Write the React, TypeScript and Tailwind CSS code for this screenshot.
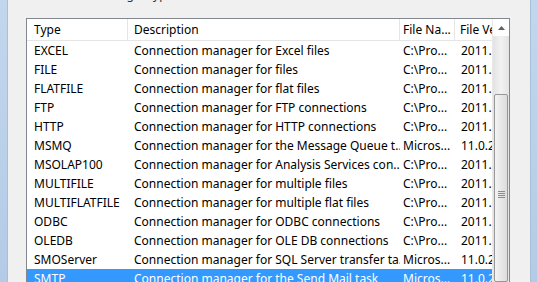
import React from "react";

interface Row {
  type: string;
  description: string;
  fileName: string;
  version: string;
  selected?: boolean;
}

const rows: Row[] = [
  {type: "EXCEL", description: "Connection manager for Excel files", fileName: "C:\\Pro...", version: "2011.0110.2100.060"},
  {type: "FILE", description: "Connection manager for files", fileName: "C:\\Pro...", version: "2011.0110.2100.060"},
  {type: "FLATFILE", description: "Connection manager for flat files", fileName: "C:\\Pro...", version: "2011.0110.2100.060"},
  {type: "FTP", description: "Connection manager for FTP connections", fileName: "C:\\Pro...", version: "2011.0110.2100.060"},
  {type: "HTTP", description: "Connection manager for HTTP connections", fileName: "C:\\Pro...", version: "2011.0110.2100.060"},
  {type: "MSMQ", description: "Connection manager for the Message Queue t...", fileName: "Micros...", version: "11.0.2100.60"},
  {type: "MSOLAP100", description: "Connection manager for Analysis Services con...", fileName: "C:\\Pro...", version: "2011.0110.2100.060"},
  {type: "MULTIFILE", description: "Connection manager for multiple files", fileName: "C:\\Pro...", version: "2011.0110.2100.060"},
  {type: "MULTIFLATFILE", description: "Connection manager for multiple flat files", fileName: "C:\\Pro...", version: "2011.0110.2100.060"},
  {type: "ODBC", description: "Connection manager for ODBC connections", fileName: "C:\\Pro...", version: "2011.0110.2100.060"},
  {type: "OLEDB", description: "Connection manager for OLE DB connections", fileName: "C:\\Pro...", version: "2011.0110.2100.060"},
  {type: "SMOServer", description: "Connection manager for SQL Server transfer ta...", fileName: "Micros...", version: "11.0.2100.60"},
  {type: "SMTP", description: "Connection manager for the Send Mail task", fileName: "Micros...", version: "11.0.2100.60", selected: true},
];

const font = {fontFamily: '"Segoe UI", "Noto Sans", sans-serif'};

export default function App() {
  return (
    <div className="flex w-[537px] h-[282px] overflow-hidden bg-[#f0f0f0] text-[12px] text-black" style={font}>
      {/* window frame, left */}
      <div className="w-[8px] shrink-0 bg-gradient-to-b from-[#c2d7ee] to-[#b3cbe6] border-r border-[#a9bfd6]" />

      <div className="flex-1 min-w-0 flex flex-col pl-[18px] pr-[20px]">
        {/* label, mostly scrolled out of view */}
        <div className="h-[18px] shrink-0 overflow-hidden">
          <div className="-mt-[13px] leading-[16px] pl-[1px] whitespace-nowrap text-[#333]">Connection manager type:</div>
        </div>

        {/* list view */}
        <div className="flex-1 min-h-0 flex border border-b-0 border-[#828790] bg-white">
          <div className="flex-1 min-w-0 flex flex-col overflow-hidden">
            {/* header */}
            <div className="flex h-[22px] shrink-0 border-b border-[#e5e5e5] bg-white whitespace-nowrap">
              <div className="w-[101px] shrink-0 pl-[7px] flex items-center border-r border-[#e5e5e5]">Type</div>
              <div className="w-[272px] shrink-0 pl-[6px] flex items-center border-r border-[#e5e5e5]">Description</div>
              <div className="w-[55px] shrink-0 pl-[3px] flex items-center border-r border-[#e5e5e5] overflow-hidden">File Na...</div>
              <div className="flex-1 min-w-0 pl-[5px] flex items-center overflow-hidden">File Version</div>
            </div>

            {rows.map((row) => (
              <div
                key={row.type}
                className={
                  row.selected
                    ? "flex h-[19px] shrink-0 items-center bg-[#3399ff] text-white whitespace-nowrap"
                    : "flex h-[19px] shrink-0 items-center whitespace-nowrap"
                }
              >
                <div className="w-[101px] shrink-0 pl-[7px] overflow-hidden">{row.type}</div>
                <div className="w-[272px] shrink-0 pl-[6px] overflow-hidden">{row.description}</div>
                <div className="w-[55px] shrink-0 pl-[3px] overflow-hidden">{row.fileName}</div>
                <div className="flex-1 min-w-0 pl-[6px] overflow-hidden">{row.version}</div>
              </div>
            ))}
          </div>

          {/* vertical scrollbar */}
          <div className="w-[17px] shrink-0 flex flex-col bg-gradient-to-r from-[#e3e3e3] via-[#f2f2f2] to-[#e3e3e3] border-l border-[#e8e8e8]">
            <div className="h-[17px] shrink-0 flex items-center justify-center bg-white">
              <svg width="7" height="4" viewBox="0 0 7 4">
                <path d="M0 4 L3.5 0 L7 4 Z" fill="#606060" />
              </svg>
            </div>
            <div className="h-[58px] shrink-0" />
            <div className="flex-1 mx-[1px] rounded-[2px] border border-[#979797] bg-gradient-to-r from-[#f4f4f4] to-[#dcdcdc] flex flex-col items-center pt-[96px]">
              <div className="w-[7px] flex flex-col gap-[1px]">
                <div className="h-[1px] bg-[#8c8c8c]" />
                <div className="h-[1px] bg-[#8c8c8c]" />
                <div className="h-[1px] bg-[#8c8c8c]" />
                <div className="h-[1px] bg-[#8c8c8c]" />
              </div>
            </div>
          </div>
        </div>
      </div>

      {/* window frame, right */}
      <div className="w-[7px] shrink-0 bg-gradient-to-b from-[#c2d7ee] to-[#b3cbe6] border-l border-[#a9bfd6]" />
    </div>
  );
}
